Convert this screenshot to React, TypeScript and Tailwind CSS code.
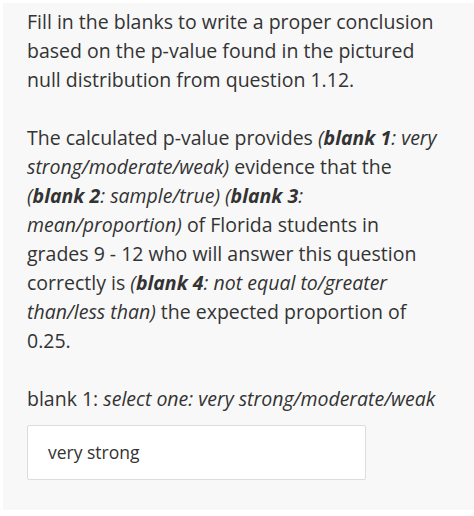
export default function App() {
  return (
    <div className="min-h-[516px] bg-white pl-[3px] pt-[3px]" style={{ fontFamily: "'Open Sans', 'Noto Sans', sans-serif" }}>
      <div className="h-[507px] bg-[#f8f8f8] pl-[24px] pr-4 pt-[4px] text-[19.5px] leading-[29px] text-[#333]">
        <p className="w-[415px]">
          Fill in the blanks to write a proper conclusion based on the p-value found in the pictured null
          distribution from question 1.12.
        </p>
        <p className="mt-[29px] w-[415px]">
          The calculated p-value provides{' '}
          <i>
            (<b>blank 1</b>: very strong/moderate/weak)
          </i>{' '}
          evidence that the{' '}
          <i>
            (<b>blank 2</b>: sample/true)
          </i>{' '}
          <i>
            (<b>blank 3</b>: mean/proportion)
          </i>{' '}
          of Florida students in grades 9 - 12 who will answer this question correctly is{' '}
          <i>
            (<b>blank 4</b>: not equal to/greater than/less than)
          </i>{' '}
          the expected proportion of 0.25.
        </p>
        <p className="mt-[29px]">
          blank 1: <i>select one: very strong/moderate/weak</i>
        </p>
        <div className="mt-[12px] flex h-[55px] w-[339px] items-center rounded-[2px] border border-[#dcdcdc] bg-white pl-[20px] text-[17.5px]">
          very strong
        </div>
      </div>
    </div>
  );
}
